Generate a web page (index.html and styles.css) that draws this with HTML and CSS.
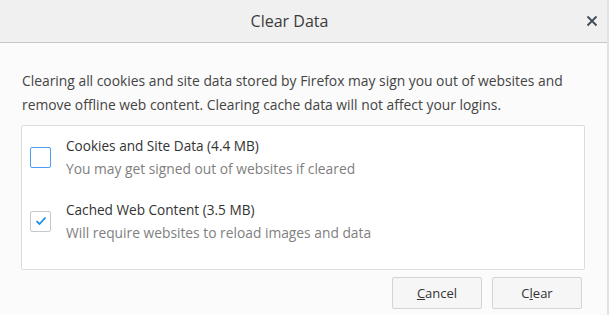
FILE: index.html
```html
<!DOCTYPE html>
<html>
<head>
<meta charset="utf-8">
<link rel="stylesheet" href="styles.css">
</head>
<body>
<div class="dialog">
  <div class="titlebar">
    <div class="title">Clear Data</div>
    <div class="close"><svg width="12" height="12" viewBox="0 0 12 12"><path d="M1.5 1.5 L10.5 10.5 M10.5 1.5 L1.5 10.5" stroke="#3f4b58" stroke-width="1.8" fill="none"/></svg></div>
  </div>
  <div class="content">
    <p class="desc">Clearing all cookies and site data stored by Firefox may sign you out of websites and remove offline web content. Clearing cache data will not affect your logins.</p>
    <div class="box">
      <div class="option">
        <span class="cb cb-focus"></span>
        <div class="labels">
          <div class="label">Cookies and Site Data (4.4 MB)</div>
          <div class="sub">You may get signed out of websites if cleared</div>
        </div>
      </div>
      <div class="option">
        <span class="cb"><svg width="12" height="10" viewBox="0 0 12 10"><path d="M1.5 5.2 L4.5 8 L10.5 1.5" stroke="#1a8fe0" stroke-width="1.8" fill="none"/></svg></span>
        <div class="labels">
          <div class="label">Cached Web Content (3.5 MB)</div>
          <div class="sub">Will require websites to reload images and data</div>
        </div>
      </div>
    </div>
    <div class="buttons">
      <button class="btn"><u>C</u>ancel</button>
      <button class="btn">C<u>l</u>ear</button>
    </div>
  </div>
</div>
</body>
</html>
```
FILE: styles.css
```css
html, body { margin: 0; padding: 0; }
body { width: 609px; height: 315px; overflow: hidden; background: #fbfbfb; font-family: "Open Sans", "Segoe UI", sans-serif; color: #333; }
.dialog { width: 607px; height: 315px; border-right: 2px solid #e2e2e2; background: #fbfbfb; }
.titlebar { height: 42px; background: #f0f0f0; border-bottom: 1px solid #c8c8c8; display: flex; align-items: center; justify-content: center; padding-right: 28px; position: relative; }
.title { font-size: 16px; color: #3b3b3b; }
.close { position: absolute; right: 9px; top: 15px; width: 12px; height: 12px; display: flex; }
.content { padding: 26px 22px 0 21px; }
.desc { margin: 0 -14px 8px 1px; font-size: 13.85px; line-height: 24px; color: #444; }
.box { border: 1px solid #dcdcdc; border-radius: 2px; background: #fff; height: 145px; box-sizing: border-box; padding: 0 8px; display: flex; flex-direction: column; gap: 2px; }
.option { display: flex; align-items: center; height: 62px; }
.cb { width: 19px; height: 19px; border: 1px solid #c8c8c8; border-radius: 2px; background: #fff; margin-right: 15px; display: flex; align-items: center; justify-content: center; flex: none; }
.cb-focus { border-color: #4a9cf5; }
.labels { display: flex; flex-direction: column; gap: 3px; }
.label { font-size: 13.6px; line-height: 20px; color: #333; }
.sub { font-size: 13.8px; line-height: 20px; color: #808080; }
.buttons { display: flex; justify-content: flex-end; gap: 10px; margin-top: 7px; padding-right: 3px; }
.btn { width: 90px; height: 32px; border: 1px solid #d4d4d4; border-radius: 2px; background: #f6f6f6; font-family: inherit; font-size: 13px; color: #333; padding: 0; }
```
